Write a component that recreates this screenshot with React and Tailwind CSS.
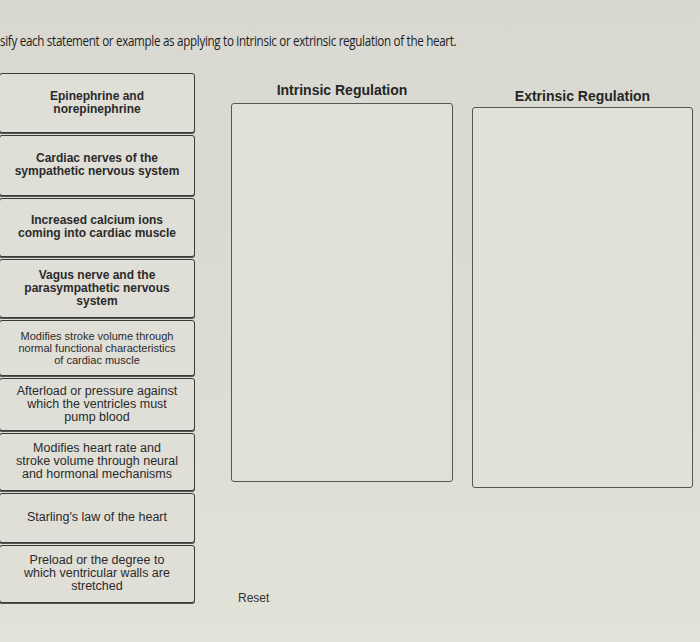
import React from "react";

const cards = [
  { h: "h-[60px]", cls: "text-[12px] font-bold", lines: ["Epinephrine and", "norepinephrine"] },
  { h: "h-[61px]", cls: "text-[12px] font-bold", lines: ["Cardiac nerves of the", "sympathetic nervous system"] },
  { h: "h-[59px]", cls: "text-[12px] font-bold", lines: ["Increased calcium ions", "coming into cardiac muscle"] },
  { h: "h-[59px]", cls: "text-[12px] font-bold", lines: ["Vagus nerve and the", "parasympathetic nervous", "system"] },
  { h: "h-[56px]", cls: "text-[11px] leading-[12px]", lines: ["Modifies stroke volume through", "normal functional characteristics", "of cardiac muscle"] },
  { h: "h-[53px]", cls: "text-[12.5px]", lines: ["Afterload or pressure against", "which the ventricles must", "pump blood"] },
  { h: "h-[58px]", cls: "text-[12.5px]", lines: ["Modifies heart rate and", "stroke volume through neural", "and hormonal mechanisms"] },
  { h: "h-[50px]", cls: "text-[12.5px]", lines: ["Starling's law of the heart"] },
  { h: "h-[58px]", cls: "text-[12.5px] leading-[13px]", lines: ["Preload or the degree to", "which ventricular walls are", "stretched"] },
];

function Card({ h, cls, lines }) {
  return (
    <div
      className={`${h} flex flex-col items-center justify-center rounded-[3px] border border-[#3a3a38] bg-[#dfded7] text-center leading-[13px] text-[#2b2b2b] shadow-[0_1px_0_#555]`}
    >
      <div className={cls}>
        {lines.map((l) => (
          <div key={l}>{l}</div>
        ))}
      </div>
    </div>
  );
}

export default function App() {
  return (
    <div className="h-[642px] w-[700px] overflow-hidden bg-gradient-to-b from-[#d9d8d1] via-[#dcdcd3] to-[#e1e2d8] font-['Liberation_Sans',Arial,sans-serif]">
      <div className="origin-left scale-x-[0.775] whitespace-nowrap pt-[29px] font-['Open_Sans',sans-serif] text-[15px] tracking-[-0.4px] text-[#1e1e1e]">
        sify each statement or example as applying to intrinsic or extrinsic regulation of the heart.
      </div>

      <div className="mt-[21px] flex">
        <div className="ml-[-1px] flex w-[196px] flex-col gap-[2px]">
          {cards.map((c, i) => (
            <Card key={i} {...c} />
          ))}
        </div>

        <div className="ml-[36px] flex w-[222px] flex-col">
          <div className="pt-[8px] text-center text-[14px] font-bold leading-[18px] text-[#252525]">
            Intrinsic Regulation
          </div>
          <div className="mt-[4px] h-[379px] rounded-[3px] border border-[#555] bg-[#e0e0d8]" />
          <div className="mt-[107px] pl-[7px] text-[12px] text-[#333]">Reset</div>
        </div>

        <div className="ml-[19px] flex w-[221px] flex-col">
          <div className="pt-[14px] text-center text-[14px] font-bold leading-[18px] text-[#252525]">
            Extrinsic Regulation
          </div>
          <div className="mt-[2px] h-[381px] rounded-[3px] border border-[#555] bg-[#e1e1d9]" />
        </div>
      </div>
    </div>
  );
}
